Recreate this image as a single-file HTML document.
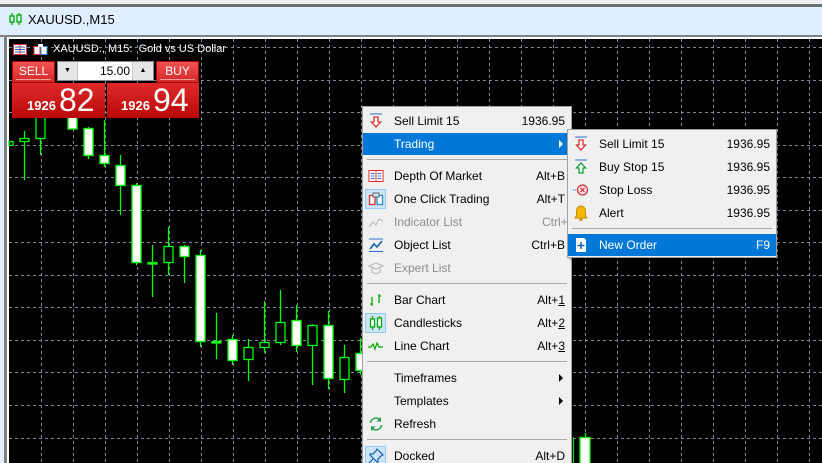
<!DOCTYPE html>
<html style="width:822px;height:463px;overflow:hidden"><head><meta charset="utf-8"><style>
*{margin:0;padding:0;box-sizing:border-box}
body{width:822px;height:463px;overflow:hidden;background:#dfefff;font-family:"Liberation Sans",sans-serif;position:relative}
.abs{position:absolute}
.menu{position:absolute;background:#f0f0f0;border:1px solid #a0a0a0;font-size:12px;color:#000;box-shadow:2px 2px 2px rgba(0,0,0,.25);overflow:hidden}
.it{position:absolute;left:0;right:0;height:22px;line-height:22px}
.it .t{position:absolute;left:31px}
.it .s{position:absolute;right:6px}
.it.hl{background:#0078d7;color:#fff}
.it.dis{color:#8d8d8d}
.sep{position:absolute;left:4px;right:4px;height:1px;background:#a8a8a8}
.ic{position:absolute;left:5px;top:3px;width:16px;height:16px}
.ico{position:absolute;left:2px;top:1px;width:21px;height:20px;background:#cce4f7;border:1px solid #99c8ef}
.arr{position:absolute;right:8px;top:7px;width:0;height:0;border-left:4px solid currentColor;border-top:4px solid transparent;border-bottom:4px solid transparent}
</style></head><body>
<div class="abs" style="left:0;top:0;width:822px;height:4px;background:#f0f0f0"></div>
<div class="abs" style="left:0;top:4px;width:822px;height:3px;background:#707070"></div>
<div class="abs" style="left:28px;top:12px;font-size:13px;color:#000">XAUUSD.,M15</div>
<svg class="abs" style="left:9px;top:13px" width="14" height="12"><g stroke="#0a0" fill="none" stroke-width="1.3"><line x1="3" y1="0" x2="3" y2="12"/><rect x="1" y="3" width="4" height="6" fill="#dfefff"/><line x1="10" y1="0" x2="10" y2="12"/><rect x="8" y="2" width="4" height="7" fill="#dfefff"/></g></svg>
<div class="abs" style="left:0;top:35px;width:822px;height:2px;background:#808080"></div>
<div class="abs" style="left:4px;top:35px;width:3px;height:428px;background:#808080"></div>
<div class="abs" style="left:7px;top:37px;width:815px;height:426px;background:#fff"></div>
<svg class="abs" style="left:0;top:0" width="822" height="463">
<rect x="9" y="39" width="813" height="424" fill="#000"/>
<g stroke="#7a8899" stroke-width="1" stroke-dasharray="3,3">
<line x1="41.5" y1="39" x2="41.5" y2="463"/><line x1="73.5" y1="39" x2="73.5" y2="463"/><line x1="105.5" y1="39" x2="105.5" y2="463"/><line x1="137.5" y1="39" x2="137.5" y2="463"/><line x1="169.5" y1="39" x2="169.5" y2="463"/><line x1="201.5" y1="39" x2="201.5" y2="463"/><line x1="233.5" y1="39" x2="233.5" y2="463"/><line x1="265.5" y1="39" x2="265.5" y2="463"/><line x1="297.5" y1="39" x2="297.5" y2="463"/><line x1="329.5" y1="39" x2="329.5" y2="463"/><line x1="361.5" y1="39" x2="361.5" y2="463"/><line x1="393.5" y1="39" x2="393.5" y2="463"/><line x1="425.5" y1="39" x2="425.5" y2="463"/><line x1="457.5" y1="39" x2="457.5" y2="463"/><line x1="489.5" y1="39" x2="489.5" y2="463"/><line x1="521.5" y1="39" x2="521.5" y2="463"/><line x1="553.5" y1="39" x2="553.5" y2="463"/><line x1="585.5" y1="39" x2="585.5" y2="463"/><line x1="617.5" y1="39" x2="617.5" y2="463"/><line x1="649.5" y1="39" x2="649.5" y2="463"/><line x1="681.5" y1="39" x2="681.5" y2="463"/><line x1="713.5" y1="39" x2="713.5" y2="463"/><line x1="745.5" y1="39" x2="745.5" y2="463"/><line x1="777.5" y1="39" x2="777.5" y2="463"/><line x1="809.5" y1="39" x2="809.5" y2="463"/>
<line x1="9" y1="47.5" x2="822" y2="47.5"/><line x1="9" y1="80.5" x2="822" y2="80.5"/><line x1="9" y1="112.5" x2="822" y2="112.5"/><line x1="9" y1="145.5" x2="822" y2="145.5"/><line x1="9" y1="177.5" x2="822" y2="177.5"/><line x1="9" y1="210.5" x2="822" y2="210.5"/><line x1="9" y1="242.5" x2="822" y2="242.5"/><line x1="9" y1="275.5" x2="822" y2="275.5"/><line x1="9" y1="307.5" x2="822" y2="307.5"/><line x1="9" y1="340.5" x2="822" y2="340.5"/><line x1="9" y1="372.5" x2="822" y2="372.5"/><line x1="9" y1="405.5" x2="822" y2="405.5"/><line x1="9" y1="438.5" x2="822" y2="438.5"/>
</g>
<g stroke="#00ff00" stroke-width="1.3">
<line x1="24.5" y1="131" x2="24.5" y2="180"/><line x1="40.5" y1="110" x2="40.5" y2="155"/><line x1="72.5" y1="110" x2="72.5" y2="129"/><line x1="88.5" y1="127" x2="88.5" y2="159"/><line x1="104.5" y1="120" x2="104.5" y2="167"/><line x1="120.5" y1="155" x2="120.5" y2="215"/><line x1="136.5" y1="183" x2="136.5" y2="265"/><line x1="152.5" y1="245" x2="152.5" y2="297"/><line x1="168.5" y1="227" x2="168.5" y2="275"/><line x1="184.5" y1="245" x2="184.5" y2="283"/><line x1="200.5" y1="250" x2="200.5" y2="347"/><line x1="216.5" y1="313" x2="216.5" y2="359"/><line x1="232.5" y1="335" x2="232.5" y2="365"/><line x1="248.5" y1="339" x2="248.5" y2="381"/><line x1="264.5" y1="301" x2="264.5" y2="353"/><line x1="280.5" y1="290" x2="280.5" y2="345"/><line x1="296.5" y1="305" x2="296.5" y2="352"/><line x1="312.5" y1="324" x2="312.5" y2="385"/><line x1="328.5" y1="311" x2="328.5" y2="389"/><line x1="344.5" y1="345" x2="344.5" y2="393"/><line x1="360.5" y1="338" x2="360.5" y2="375"/><line x1="573.5" y1="437" x2="573.5" y2="463"/><line x1="585.5" y1="433" x2="585.5" y2="463"/>
</g>
<g stroke="#00ff00" stroke-width="1.3">
<rect x="9" y="141.5" width="4" height="4" fill="#000"/>
<rect x="20" y="138.5" width="9" height="3" fill="#000"/>
<rect x="36" y="110" width="9" height="28.5" fill="#000"/>
<rect x="68" y="110" width="9" height="19" fill="#fff"/>
<rect x="84" y="128.5" width="9" height="27" fill="#fff"/>
<rect x="100" y="155.5" width="9" height="8" fill="#fff"/>
<rect x="116" y="165.5" width="9" height="20" fill="#fff"/>
<rect x="132" y="185.5" width="9" height="77" fill="#fff"/>
<rect x="148" y="262.5" width="9" height="1.5" fill="#fff"/>
<rect x="164" y="246.5" width="9" height="16" fill="#000"/>
<rect x="180" y="246.5" width="9" height="10" fill="#fff"/>
<rect x="196" y="255.5" width="9" height="86" fill="#fff"/>
<rect x="212" y="341.5" width="9" height="1.5" fill="#fff"/>
<rect x="228" y="339.5" width="9" height="21" fill="#fff"/>
<rect x="244" y="347.5" width="9" height="12" fill="#000"/>
<rect x="260" y="342.5" width="9" height="5" fill="#000"/>
<rect x="276" y="322.5" width="9" height="20" fill="#000"/>
<rect x="292" y="320.5" width="9" height="25" fill="#fff"/>
<rect x="308" y="325.5" width="9" height="20" fill="#000"/>
<rect x="324" y="325.5" width="9" height="53" fill="#fff"/>
<rect x="340" y="357.5" width="9" height="22" fill="#000"/>
<rect x="356" y="353.5" width="9" height="17" fill="#fff"/>
<rect x="580" y="437.5" width="10" height="30" fill="#fff"/>
</g>
</svg>
<!-- chart header -->
<svg class="abs" style="left:13px;top:44px" width="36" height="11"><rect x="0.5" y="0.5" width="13" height="10" fill="#fff" stroke="#d33"/><g stroke="#2962c8"><line x1="2" y1="3" x2="12" y2="3"/><line x1="2" y1="5.5" x2="12" y2="5.5"/><line x1="2" y1="8" x2="12" y2="8"/></g><line x1="7" y1="1" x2="7" y2="10" stroke="#d33"/><rect x="21" y="2.5" width="6" height="8" fill="#fff" stroke="#d33"/><rect x="28" y="2.5" width="6" height="8" fill="#fff" stroke="#2a8ae0"/><rect x="25" y="0" width="5" height="3" fill="#fff"/></svg>
<div class="abs" style="left:53px;top:43px;font-size:11px;color:#fff;white-space:nowrap">XAUUSD., M15:&nbsp; Gold vs US Dollar</div>
<!-- trade panel -->
<div class="abs" style="left:12px;top:61px;width:43px;height:22px;background:linear-gradient(#f25050,#d42a2a);border:1px solid #a00;color:#fff;font-size:12px;text-align:center;line-height:19px">SELL<div style="position:absolute;left:3px;right:3px;bottom:2px;height:1px;background:#f99"></div></div>
<div class="abs" style="left:57px;top:61px;width:97px;height:20px;background:#c8c8c8;border:1px solid #888"></div>
<div class="abs" style="left:58px;top:62px;width:19px;height:18px;background:#e6e6e6;font-size:7px;text-align:center;line-height:18px">▼</div>
<div class="abs" style="left:78px;top:62px;width:54px;height:18px;background:#fff;font-size:12px;text-align:right;line-height:18px;padding-right:2px">15.00</div>
<div class="abs" style="left:133px;top:62px;width:20px;height:18px;background:#e6e6e6;font-size:7px;text-align:center;line-height:18px">▲</div>
<div class="abs" style="left:156px;top:61px;width:43px;height:22px;background:linear-gradient(#f25050,#d42a2a);border:1px solid #a00;color:#fff;font-size:12px;text-align:center;line-height:19px">BUY<div style="position:absolute;left:3px;right:3px;bottom:2px;height:1px;background:#f99"></div></div>
<div class="abs" style="left:12px;top:83px;width:93px;height:35px;background:linear-gradient(#e02a2a,#b80808);color:#fff;white-space:nowrap"><span style="position:absolute;left:15px;top:15px;font-size:13px;font-weight:bold">1926</span><span style="position:absolute;left:47px;top:-1px;font-size:32px">82</span></div>
<div class="abs" style="left:107px;top:83px;width:92px;height:35px;background:linear-gradient(#e02a2a,#b80808);color:#fff;white-space:nowrap"><span style="position:absolute;left:14px;top:15px;font-size:13px;font-weight:bold">1926</span><span style="position:absolute;left:46px;top:-1px;font-size:32px">94</span></div>

<!-- main menu -->
<div class="menu" style="left:362px;top:106px;width:210px;height:357px;border-bottom:none">
<div class="it" style="top:3px"><svg class="ic" viewBox="0 0 16 16"><line x1="2" y1="1" x2="14" y2="1" stroke="#2a6fd0"/><path d="M6 4h4v5h2.5L8 14 3.5 9H6z" fill="#fff" stroke="#e03030" stroke-width="1.3"/></svg><span class="t">Sell Limit 15</span><span class="s">1936.95</span></div>
<div class="it hl" style="top:26px"><span class="t">Trading</span><span class="arr"></span></div>
<div class="sep" style="top:52px"></div>
<div class="it" style="top:58px"><svg class="ic" viewBox="0 0 16 16"><rect x="1" y="2.5" width="14" height="11" fill="#fff" stroke="#e03030"/><line x1="8" y1="3" x2="8" y2="13" stroke="#e03030"/><g stroke="#2962c8"><line x1="3" y1="5.5" x2="6.5" y2="5.5"/><line x1="3" y1="8" x2="6.5" y2="8"/><line x1="3" y1="10.5" x2="6.5" y2="10.5"/><line x1="9.5" y1="5.5" x2="13" y2="5.5"/><line x1="9.5" y1="8" x2="13" y2="8"/><line x1="9.5" y1="10.5" x2="13" y2="10.5"/></g></svg><span class="t">Depth Of Market</span><span class="s">Alt+B</span></div>
<div class="it" style="top:81px"><div class="ico"></div><svg class="ic" viewBox="0 0 16 16"><rect x="1.5" y="4.5" width="5.5" height="9" fill="#fff" stroke="#e03030" stroke-width="1.3"/><rect x="9" y="4.5" width="5.5" height="9" fill="#fff" stroke="#2a8ae0" stroke-width="1.3"/><rect x="5" y="2" width="6" height="4" fill="#cce4f7" stroke="#666"/></svg><span class="t">One Click Trading</span><span class="s">Alt+T</span></div>
<div class="it dis" style="top:104px"><svg class="ic" viewBox="0 0 16 16"><path d="M1 13l4-5 3 3 3-6 4 2" fill="none" stroke="#bbb" stroke-width="1.2"/></svg><span class="t">Indicator List</span><span class="s" style="right:0">Ctrl+I</span></div>
<div class="it" style="top:127px"><svg class="ic" viewBox="0 0 16 16"><line x1="1" y1="2" x2="15" y2="2" stroke="#2a6fd0"/><line x1="1" y1="14.5" x2="15" y2="14.5" stroke="#2a6fd0"/><path d="M2 12l4-5 3 3 5-6" fill="none" stroke="#1a5fb4" stroke-width="1.6"/></svg><span class="t">Object List</span><span class="s">Ctrl+B</span></div>
<div class="it dis" style="top:150px"><svg class="ic" viewBox="0 0 16 16"><path d="M1 6l7-3 7 3-7 3z M4 8v4c2 2 6 2 8 0V8" fill="none" stroke="#bbb" stroke-width="1.2"/></svg><span class="t">Expert List</span></div>
<div class="sep" style="top:176px"></div>
<div class="it" style="top:182px"><svg class="ic" viewBox="0 0 16 16"><g stroke="#0a0" stroke-width="1.3" fill="none"><path d="M4 5v9M2 12h2"/><path d="M11 2v9M11 4h2"/></g></svg><span class="t">Bar Chart</span><span class="s">Alt+<u>1</u></span></div>
<div class="it" style="top:205px"><div class="ico"></div><svg class="ic" viewBox="0 0 16 16"><g stroke="#0a0" stroke-width="1.3" fill="#fff"><line x1="4.5" y1="1" x2="4.5" y2="15"/><rect x="2.5" y="4" width="4" height="8"/><line x1="11.5" y1="1" x2="11.5" y2="15"/><rect x="9.5" y="3" width="4" height="9"/></g></svg><span class="t">Candlesticks</span><span class="s">Alt+<u>2</u></span></div>
<div class="it" style="top:228px"><svg class="ic" viewBox="0 0 16 16"><path d="M0 9h3l2-3 2 5 2-6 2 4h4" fill="none" stroke="#0a0" stroke-width="1.2"/></svg><span class="t">Line Chart</span><span class="s">Alt+<u>3</u></span></div>
<div class="sep" style="top:254px"></div>
<div class="it" style="top:260px"><span class="t">Timeframes</span><span class="arr"></span></div>
<div class="it" style="top:283px"><span class="t">Templates</span><span class="arr"></span></div>
<div class="it" style="top:306px"><svg class="ic" viewBox="0 0 16 16"><g fill="none" stroke="#1aa04a" stroke-width="1.4"><path d="M2.5 7a5.5 5.5 0 0 1 10-2.5"/><path d="M13.5 9a5.5 5.5 0 0 1-10 2.5"/></g><path d="M13 1v4.5H8.5z" fill="#1aa04a"/><path d="M3 15v-4.5h4.5z" fill="#1aa04a"/></svg><span class="t">Refresh</span></div>
<div class="sep" style="top:332px"></div>
<div class="it" style="top:338px"><div class="ico"></div><svg class="ic" viewBox="0 0 16 16"><path d="M9 1l6 6-2 1-3 3 0 3-1 0-7-7 0-1 3 0 3-3z M5 11l-4 4" fill="none" stroke="#1a5fb4" stroke-width="1.2"/></svg><span class="t">Docked</span><span class="s">Alt+D</span></div>
</div>

<!-- submenu -->
<div class="menu" style="left:567px;top:129px;width:210px;height:129px">
<div class="it" style="top:3px"><svg class="ic" viewBox="0 0 16 16"><line x1="2" y1="1" x2="14" y2="1" stroke="#2a6fd0"/><path d="M6 4h4v5h2.5L8 14 3.5 9H6z" fill="#fff" stroke="#e03030" stroke-width="1.3"/></svg><span class="t">Sell Limit 15</span><span class="s">1936.95</span></div>
<div class="it" style="top:26px"><svg class="ic" viewBox="0 0 16 16"><line x1="2" y1="1" x2="14" y2="1" stroke="#2a6fd0"/><path d="M6 14h4V9h2.5L8 4 3.5 9H6z" fill="#fff" stroke="#10a030" stroke-width="1.3"/></svg><span class="t">Buy Stop 15</span><span class="s">1936.95</span></div>
<div class="it" style="top:49px"><svg class="ic" viewBox="0 0 16 16"><circle cx="9.5" cy="8" r="5" fill="#fde" stroke="#e03030" stroke-width="1.2"/><path d="M7.5 6l4 4M11.5 6l-4 4" stroke="#e03030" stroke-width="1.2"/><path d="M0 8h3" stroke="#2a6fd0" stroke-dasharray="1,1"/></svg><span class="t">Stop Loss</span><span class="s">1936.95</span></div>
<div class="it" style="top:72px"><svg class="ic" viewBox="0 0 16 16"><path d="M8 1c-3 0-4.5 2.5-4.5 5.5v4L2 13h12l-1.5-2.5v-4C12.5 3.5 11 1 8 1z" fill="#f5b800" stroke="#c98a00"/><circle cx="8" cy="14.5" r="1.5" fill="#c98a00"/></svg><span class="t">Alert</span><span class="s">1936.95</span></div>
<div class="sep" style="top:98px"></div>
<div class="it hl" style="top:104px"><svg class="ic" viewBox="0 0 16 16"><path d="M3 1h8l2 2v12H3z" fill="#fff"/><path d="M8 5v7M4.5 8.5h7" stroke="#1a5fb4" stroke-width="1.5"/></svg><span class="t">New Order</span><span class="s">F9</span></div>
</div>
</body></html>
